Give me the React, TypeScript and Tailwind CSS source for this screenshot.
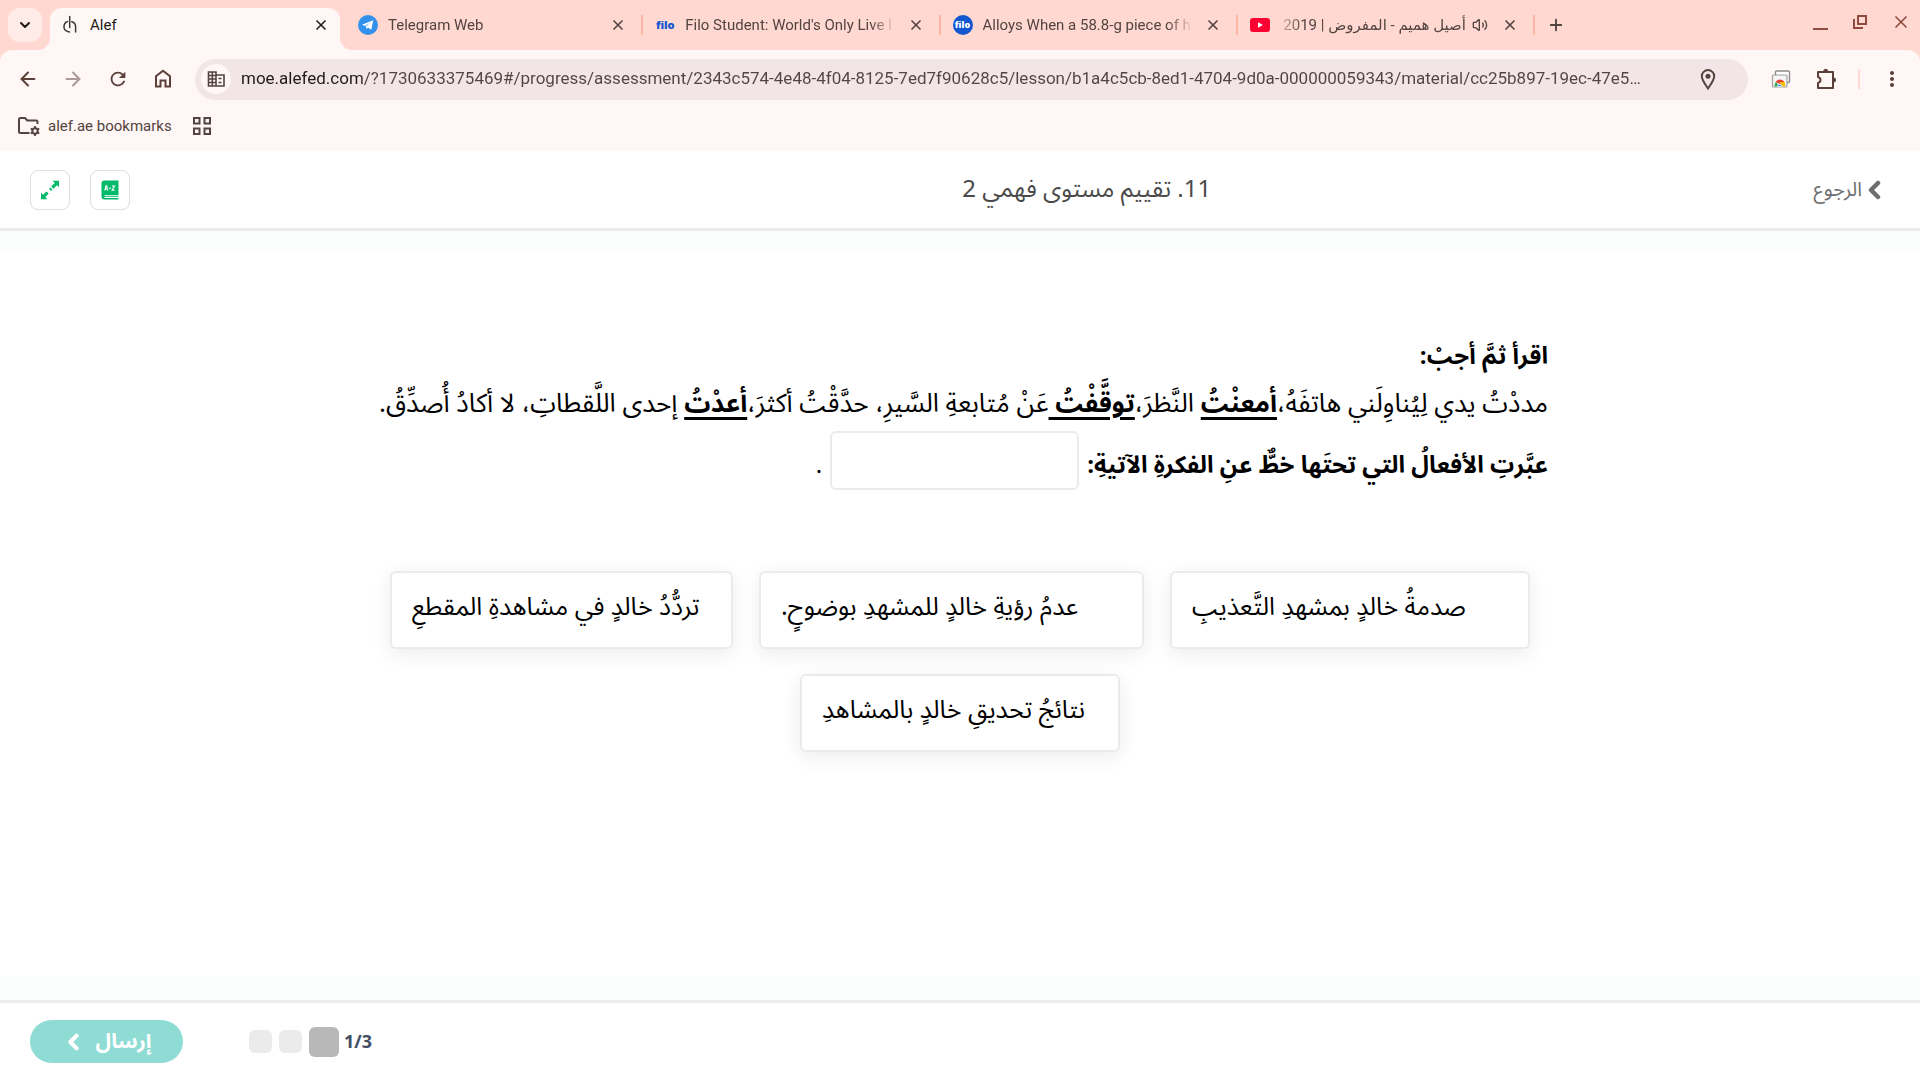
import React from "react";
import { ArrowLeft, ArrowRight, X, Plus, ChevronDown, Volume2 } from "lucide-react";
import { MdRefresh, MdMoreVert } from "react-icons/md";

const AlefIcon = () => (
  <svg className="h-5 w-5 shrink-0" viewBox="0 0 20 20" fill="none" stroke="#3a3a3c" strokeWidth="1.5" strokeLinecap="round">
    <path d="M9.700 1.500v11" />
    <path d="M7.500 6.500C4.800 7.500 3.800 10.200 4 12.500c.3 2.400 2.300 4 5.500 4.500" />
    <path d="M11.800 6.800c2.700.8 3.800 2.500 3.800 5V17" />
  </svg>
);

const TelegramIcon = () => (
  <svg className="h-5 w-5 shrink-0" viewBox="0 0 20 20">
    <circle cx="10" cy="10" r="10" fill="#3390ec" />
    <path d="M4 9.800 15.200 5.300 13.300 14.800 9.900 12.400 8.300 14 8 11.300 12.700 7.400 6.900 11z" fill="#fff" />
  </svg>
);

const FiloText = () => (
  <span className="flex h-5 w-5 shrink-0 items-center justify-center font-['Open_Sans',sans-serif] text-[11px] font-extrabold text-[#1357d0]">filo</span>
);

const FiloRound = () => (
  <span className="flex h-5 w-5 shrink-0 items-center justify-center rounded-full bg-[#1257cf] font-['Open_Sans',sans-serif] text-[9px] font-extrabold text-white">filo</span>
);

const YouTubeIcon = () => (
  <svg className="h-5 w-5 shrink-0" viewBox="0 0 20 20">
    <rect x="0" y="3" width="20" height="14" rx="3" fill="#ff0033" />
    <path d="M8 7.200v5.600l5-2.800z" fill="#fff" />
  </svg>
);

const CloseTab = ({ name }: { name: string }) => (
  <button aria-label={`Close ${name}`} className="flex h-5 w-5 shrink-0 items-center justify-center">
    <X className="h-4 w-4" strokeWidth={2.5} />
  </button>
);

const Tab = ({ title, icon }: { title: string; icon: React.ReactNode }) => (
  <div className="flex h-5 min-w-0 flex-1 items-center border-r-2 border-[#ffb4a5] pr-[13px] pl-3">
    {icon}
    <span className="mx-[10px] min-w-0 flex-1 overflow-hidden whitespace-nowrap [mask-image:linear-gradient(to_right,#000_88%,transparent)]">{title}</span>
    <CloseTab name={title} />
  </div>
);

const HomeIcon = () => (
  <svg className="h-[22px] w-[22px]" viewBox="0 0 22 22" fill="none" stroke="currentColor" strokeWidth="2">
    <path d="M4 18.500V8.300L11 2.700l7 5.600v10.200h-4.500v-6h-5v6z" />
  </svg>
);

const ExtensionIcon = () => (
  <svg className="h-6 w-6" viewBox="0 0 24 24" fill="none" stroke="currentColor" strokeWidth="2" strokeLinejoin="round">
    <path d="M4 5h15v16H4v-5c3.300-1 3.300-5 0-6z" />
    <path d="M9.700 4.300a2 2 0 0 1 4 0zM19.700 11a2 2 0 0 1 0 4z" fill="currentColor" strokeWidth="1" />
  </svg>
);

const PinIcon = () => (
  <svg className="h-6 w-6" viewBox="0 0 24 24" fill="none" stroke="#534341" strokeWidth="2">
    <path d="M12 21.500C8.500 16.500 5.800 13 5.800 9.300a6.200 6.200 0 0 1 12.400 0c0 3.700-2.700 7.200-6.200 12.200z" />
    <circle cx="12" cy="9.200" r="2.500" fill="#534341" stroke="none" />
  </svg>
);

const SiteIcon = () => (
  <svg className="h-[18px] w-[18px]" viewBox="0 0 18 18" fill="none" stroke="#534341" strokeWidth="1.600">
    <path d="M1.500 2h7.500v14H1.500zM9 5h8v11H9M1.500 5.500H9M1.500 9H9M1.500 12.500H9M5.300 2v14" />
    <path d="M11.500 8.500h3M11.500 12.500h3" />
  </svg>
);

const PhotosIcon = () => (
  <svg className="h-5 w-5" viewBox="0 0 20 20">
    <rect x="4.500" y="2" width="14" height="11.500" rx="1" fill="#fff" stroke="#8c8c8c" strokeWidth="1.400" />
    <rect x="1.500" y="6" width="14.500" height="12" rx="1" fill="#f5f5f5" stroke="#a0a0a0" strokeWidth="1.200" />
    <path d="M3.500 17.500a5.500 5.500 0 0 1 1.500-4.500l3.500 4.500z" fill="#34a853" />
    <path d="M4.500 13a5.300 5.300 0 0 1 9 0L8.800 15z" fill="#ea4335" />
    <path d="M9 13h4.500q1 2 .8 4.500H9z" fill="#fbbc04" />
    <path d="M6.500 17.500a2.300 2.300 0 0 1 4.600 0z" fill="#4285f4" stroke="#fff" strokeWidth=".7" />
  </svg>
);

const FolderIcon = () => (
  <svg className="h-5 w-[22px]" viewBox="0 0 22 20" fill="none" stroke="#534341" strokeWidth="2">
    <path d="M11.500 17H2.500Q1 17 1 15.500V3.500Q1 2 2.500 2H7l2.300 2.500H18Q19.500 4.500 19.500 6v2" />
    <circle cx="17" cy="15" r="2.700" strokeWidth="2" />
    <path d="M17 10v2M17 18v2M12.700 12.500l1.700 1M19.600 16.500l1.700 1M12.700 17.500l1.700-1M19.600 13.500l1.700-1" strokeWidth="1.800" />
  </svg>
);

const AppsIcon = () => (
  <svg className="h-[18px] w-[18px]" viewBox="0 0 18 18" fill="none" stroke="#534341" strokeWidth="2">
    <path d="M1 1h5.500v5.500H1zM11.500 1H17v5.500h-5.500zM1 11.500h5.500V17H1zM11.500 11.500H17V17h-5.500z" />
  </svg>
);

const ExpandIcon = () => (
  <svg className="h-5 w-5" viewBox="0 0 20 20" fill="#00b96b">
    <path d="M12.500.8H19v6.400l-2-2-3.600 3.600-2.200-2.200L14.800 3zM1 12.800v6.400h6.500l-2.200-2.200 3.400-3.400-2.200-2.200L3 14.800z" />
    <path d="M12.500 9.700 11.200 11 9 8.800l1.300-1.300z" />
  </svg>
);

const DictionaryIcon = () => (
  <svg className="h-5 w-5" viewBox="0 0 20 20">
    <path d="M4 .5h14.500v14.800H4.500v1h14v.8H4.500v.9h14v1.500H4q-2.500-.3-2.500-2.500V3Q1.500.7 4 .5z" fill="#00b96b" />
    <path d="M4.800 10.500 6 5.800h.6l1.200 4.700M5.200 9h2.200M9 8.300h2M12 6h2.600L12 10.300h2.700" fill="none" stroke="#fff" strokeWidth="1.100" />
  </svg>
);

const Chevron = ({ className }: { className: string }) => (
  <svg className={className} viewBox="0 0 14 20" fill="none" stroke="currentColor" strokeWidth="4.500" strokeLinecap="round" strokeLinejoin="round">
    <path d="M11 3 4 10l7 7" />
  </svg>
);

const PAGE_URL =
  "moe.alefed.com/?1730633375469#/progress/assessment/2343c574-4e48-4f04-8125-7ed7f90628c5/lesson/b1a4c5cb-8ed1-4704-9d0a-000000059343/material/cc25b897-19ec-47e5…";

const Browser = () => (
  <header className="bg-[#ffd9d1] font-[Roboto,'DejaVu_Sans',sans-serif] text-[#534341]">
    <div className="flex h-[50px] items-start pt-2 pl-2 text-[15px] leading-5">
      <button aria-label="Search tabs" className="flex h-[34px] w-[34px] items-center justify-center rounded-xl bg-[#ffece8] text-[#201a19]">
        <ChevronDown className="h-4 w-4" strokeWidth={3} />
      </button>
      <div className="relative ml-2 flex h-[42px] w-[290px] items-center rounded-t-xl bg-[#fff7f5] pr-[9px] pb-2 pl-[10px] text-[#201a19]">
        <span className="absolute bottom-0 -left-3 h-3 w-3 bg-[radial-gradient(circle_at_0_0,#ffd9d1_12px,#fff7f5_12px)]" />
        <span className="absolute -right-3 bottom-0 h-3 w-3 bg-[radial-gradient(circle_at_100%_0,#ffd9d1_12px,#fff7f5_12px)]" />
        <AlefIcon />
        <span className="ml-[10px] flex-1">Alef</span>
        <CloseTab name="Alef" />
      </div>
      <div className="flex max-w-[1195px] min-w-0 flex-1 self-start pt-[7px] pl-[6px]">
        <Tab title="Telegram Web" icon={<TelegramIcon />} />
        <Tab title="Filo Student: World's Only Live I" icon={<FiloText />} />
        <Tab title="Alloys When a 58.8-g piece of h" icon={<FiloRound />} />
        <div className="flex h-5 min-w-0 flex-1 items-center border-r-2 border-[#ffb4a5] pr-[13px] pl-3">
          <YouTubeIcon />
          <span dir="rtl" className="mr-[6px] ml-1 min-w-0 flex-1 overflow-hidden whitespace-nowrap [mask-image:linear-gradient(to_left,#000_85%,transparent)]">أصيل هميم - المفروض | 2019</span>
          <Volume2 className="mr-3 h-4 w-4 shrink-0" />
          <CloseTab name="YouTube" />
        </div>
      </div>
      <button aria-label="New tab" className="mt-[7px] ml-[11px] flex h-5 w-5 items-center justify-center"><Plus className="h-[18px] w-[18px]" strokeWidth={2.500} /></button>
      <div className="ml-auto flex h-7 items-center gap-[23px] pr-[9px] text-[#8f4c3e]">
        <button aria-label="Minimize" className="flex h-4 w-4 items-end"><span className="h-[2px] w-[15px] bg-current" /></button>
        <button aria-label="Restore">
          <svg className="h-4 w-4" viewBox="0 0 16 16" fill="none" stroke="currentColor" strokeWidth="2"><path d="M6 2h8v8H6zM2 5v9h9" /></svg>
        </button>
        <button aria-label="Close window"><X className="h-5 w-5" /></button>
      </div>
    </div>
    <div className="rounded-t-xl bg-[#fff7f5]">
      <div className="flex h-[58px] items-center pr-4 pl-[17px] text-[#5b403a]">
        <div className="flex gap-[23px]">
          <button aria-label="Back"><ArrowLeft className="h-[22px] w-[22px]" strokeWidth={2.200} /></button>
          <button aria-label="Forward" className="opacity-50"><ArrowRight className="h-[22px] w-[22px]" strokeWidth={2.200} /></button>
          <button aria-label="Reload"><MdRefresh className="h-[22px] w-[22px]" /></button>
          <button aria-label="Home"><HomeIcon /></button>
        </div>
        <div className="ml-[21px] flex h-[41px] min-w-0 flex-1 items-center rounded-full bg-[#f2e5e7] pr-7 pl-[6px]">
          <button aria-label="View site information" className="flex h-[30px] w-[30px] shrink-0 items-center justify-center rounded-full bg-[#fff7f5]"><SiteIcon /></button>
          <input aria-label="Address" readOnly value={PAGE_URL} className="ml-[10px] min-w-0 flex-1 bg-[linear-gradient(to_right,#201a19_121px,#534341_121px)] bg-clip-text text-[17px] text-transparent outline-none" />
          <button aria-label="Location" className="shrink-0"><PinIcon /></button>
        </div>
        <div className="flex items-center pl-[23px]">
          <button aria-label="Screen captures"><PhotosIcon /></button>
          <button aria-label="Extensions" className="ml-[23px]"><ExtensionIcon /></button>
          <span className="mx-5 h-5 w-[2px] bg-[#ffdad3]" />
          <button aria-label="Menu"><MdMoreVert className="h-6 w-6" /></button>
        </div>
      </div>
      <div className="flex h-[43px] items-center pb-[7px] pl-[18px] text-[15px]">
        <button className="flex items-center gap-2"><FolderIcon />alef.ae bookmarks</button>
        <button aria-label="Apps" className="ml-[21px]"><AppsIcon /></button>
      </div>
    </div>
  </header>
);

const Key = ({ children }: { children: React.ReactNode }) => (
  <strong className="underline decoration-[3px] underline-offset-[5px]">{children}</strong>
);

const Option = ({ width, children }: { width: string; children: React.ReactNode }) => (
  <button className={`${width} h-[78px] rounded-md border-2 border-[#ebebeb] bg-white pb-1 pl-5 text-left whitespace-nowrap shadow-[0_5px_20px_rgba(0,0,0,0.08)]`}>
    <span dir="rtl">{children}</span>
  </button>
);

export default function App() {
  return (
    <div className="flex min-h-screen flex-col bg-white font-['Noto_Sans_Arabic','DejaVu_Sans',sans-serif]">
      <Browser />
      <nav dir="rtl" className="flex h-20 items-center border-b-[3px] border-[#ebebeb] pr-[39px] pl-[30px]">
        <a href="#back" className="flex items-center gap-[5px] text-[20px] text-[#6f6f6f]">
          <Chevron className="h-5 w-[14px]" />
          الرجوع
        </a>
        <h1 className="flex-1 pl-[230px] text-center text-[24px] text-[#4a4a4a]">11. تقييم مستوى فهمي 2</h1>
        <div className="flex gap-5">
          <button aria-label="Dictionary" className="flex h-10 w-10 items-center justify-center rounded-lg border border-[#dedede]"><DictionaryIcon /></button>
          <button aria-label="Full screen" className="flex h-10 w-10 items-center justify-center rounded-lg border border-[#dedede]"><ExpandIcon /></button>
        </div>
      </nav>
      <main className="flex-1 border-y-[23px] border-[#fbfefd] pt-20 text-[24px] text-black">
        <div dir="rtl" className="mx-auto w-full max-w-[1178px] px-[1px]">
          <p className="leading-[46px] font-bold">اقرأ ثمَّ أجبْ:</p>
          <p className="text-[26px] leading-[48px] whitespace-nowrap">
            مددْتُ يدي لِيُناوِلَني هاتفَهُ،<Key>أمعنْتُ</Key> النَّظرَ،<Key>توقَّفْتُ </Key>عَنْ مُتابعةِ السَّيرِ، حدَّقْتُ أكثرَ،<Key>أعدْتُ</Key> إحدى اللَّقطاتِ، لا أكادُ أُصدِّقُ.
          </p>
          <div className="flex h-16 items-center gap-[8px]">
            <label htmlFor="answer" className="pt-3 font-bold">عبَّرتِ الأفعالُ التي تحتَها خطٌّ عنِ الفكرةِ الآتيةِ:</label>
            <input id="answer" className="h-[59px] w-[249px] rounded-md border-2 border-[#ebebeb] px-4" />
            <span className="pt-3">.</span>
          </div>
        </div>
        <div dir="rtl" className="mx-auto mt-[79px] flex max-w-[1240px] flex-wrap justify-center gap-x-[26px] gap-y-[25px] text-[25px]">
          <Option width="w-[360px]">صدمةُ خالدٍ بمشهدِ التَّعذيبِ</Option>
          <Option width="w-[385px]">عدمُ رؤيةِ خالدٍ للمشهدِ بوضوحٍ.</Option>
          <Option width="w-[343px]">تردُّدُ خالدٍ في مشاهدةِ المقطعِ</Option>
          <Option width="w-[320px]">نتائجُ تحديقِ خالدٍ بالمشاهدِ</Option>
        </div>
      </main>
      <footer className="flex h-20 items-center border-t-[3px] border-[#ebebeb] pl-[30px]">
        <button dir="rtl" className="flex h-[43px] w-[153px] items-center justify-center gap-4 rounded-full bg-[#8fdcd4] pl-1 text-[21px] font-bold text-white">
          إرسال
          <Chevron className="h-[18px] w-[14px]" />
        </button>
        <div className="ml-[66px] flex items-center gap-[7px]">
          <span className="h-[23px] w-[23px] rounded-md bg-[#ebebeb]" />
          <span className="h-[23px] w-[23px] rounded-md bg-[#ebebeb]" />
          <span className="h-[30px] w-[30px] rounded-md bg-[#b8b8b8]" />
        </div>
        <span className="ml-[5px] font-['Noto_Sans',sans-serif] text-[18px] font-bold text-[#434d63]">1/3</span>
      </footer>
    </div>
  );
}
